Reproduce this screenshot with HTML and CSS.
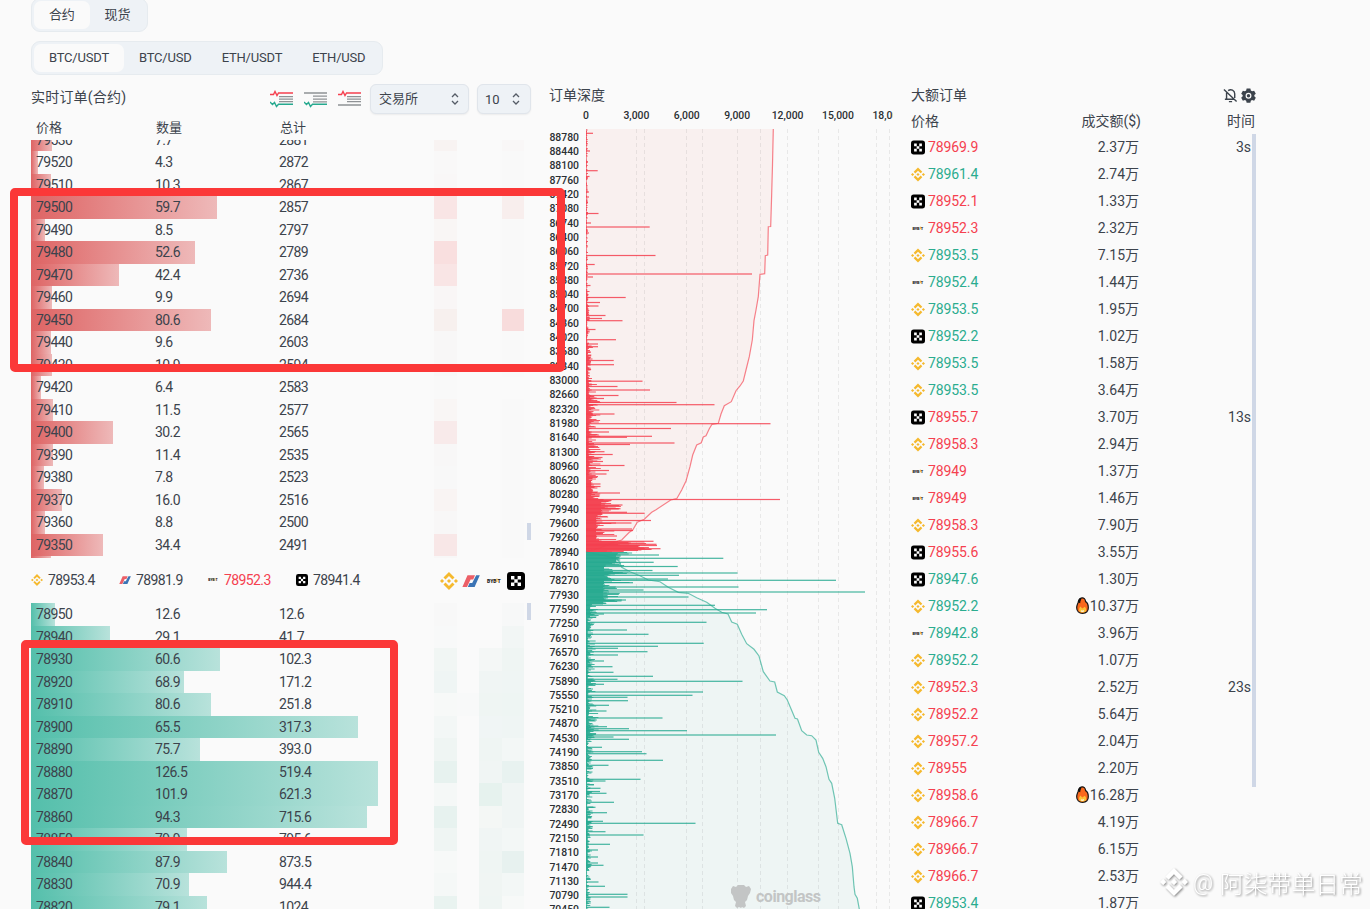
FILE: index.html
```html
<!DOCTYPE html>
<html lang="zh-CN">
<head>
    <meta charset="UTF-8">
    <meta name="viewport" content="width=device-width, initial-scale=1.0">
    <title>订单深度</title>
    <link rel="stylesheet" href="styles.css">
</head>
<body>
    <svg class="sprite" width="0" height="0">
        <symbol id="binance" viewBox="0 0 24 24">
            <path d="M16.624 13.92l2.718 2.716-7.353 7.353-7.353-7.352 2.717-2.717 4.636 4.66 4.635-4.66zm4.637-4.636L24 12l-2.715 2.716L18.568 12l2.693-2.716zm-9.272 0l2.716 2.692-2.717 2.717L9.272 12l2.716-2.715zm-9.273 0L5.41 12l-2.692 2.692L0 12l2.716-2.716zM11.989.012l7.353 7.329-2.718 2.715-4.636-4.636-4.635 4.66-2.717-2.716L11.989.012z"/>
        </symbol>
        <symbol id="okx" viewBox="0 0 18 18">
            <rect width="18" height="18" rx="3.5" fill="#000"/>
            <path fill="#fff" d="M4 4h3.4v3.4H4zM10.6 4H14v3.4h-3.4zM7.3 7.3h3.4v3.4H7.3zM4 10.6h3.4V14H4zM10.6 10.6H14V14h-3.4z"/>
        </symbol>
        <symbol id="bybit" viewBox="0 0 18 18">
            <text x="2" y="11" font-size="5" font-weight="900" textLength="9" fill="#222">BYB</text>
            <rect x="11.4" y="6.6" width="1" height="3.4" fill="#f7a600"/>
            <text x="12.6" y="11" font-size="5" font-weight="900" fill="#222">T</text>
        </symbol>
        <symbol id="bitmex" viewBox="0 0 18 18">
            <path fill="#ec5f67" d="M5.500 3.200h7.500L11.200 7.500H8.600L5 15H.4z"/>
            <path fill="#3b74b5" d="M14.200 3.200h3.600L12.600 15H5.800l1.800-4h2.600z"/>
        </symbol>
        <symbol id="fire" viewBox="0 0 13 17">
            <path fill="#f9681c" stroke="#141414" stroke-width="1.200" d="M5.200 1C8 .4 9.400 2 9.600 4.600 11.600 5.600 12.300 8 12.300 10.800c0 3.400-2.400 5.500-5.800 5.500S.7 14 .7 10.700c0-2.600.9-3.500 1.400-5.300C2.500 3.600 3 1.500 5.200 1z"/>
            <path fill="#111" d="M5.500.8C3 1.200 2.200 3 2.200 5.500L4.200 6.200C4.200 4 5.600 2.500 5.500.8z"/>
            <path fill="#fcc036" d="M4.300 9.600l2 1.800 2.500-1.600c1.600 1.900 1.700 3.200.9 4.600-1.500 1.300-4.800 1.300-6.200 0-.9-1.700-.4-3.100.8-4.800z"/>
            <path fill="#fff" d="M5.200 13.200l1.200.5 1.300-.7v1.800H5.200z"/>
        </symbol>
        <symbol id="sort" viewBox="0 0 10 14">
            <path d="M2 5l3-3 3 3M2 9l3 3 3-3" fill="none" stroke="#555c66" stroke-width="1.3"/>
        </symbol>
    </svg>

    <div class="page">
        <div class="tabs tabs-type">
            <button class="active">合约</button>
            <button>现货</button>
        </div>
        <div class="tabs">
            <button class="active">BTC/USDT</button>
            <button>BTC/USD</button>
            <button>ETH/USDT</button>
            <button>ETH/USD</button>
        </div>

        <div class="board">
            <section class="book">
                <div class="book-bar">
                    <h2>实时订单(合约)</h2>
                    <svg class="mode" viewBox="0 0 24 18" fill="none">
                        <path stroke="#8f9295" stroke-width="1.300" d="M9 6.700h14M9 9.200h14M9 11.700h14"/>
                        <path stroke="#f5404f" stroke-width="1.400" d="M0 4.500h3.500l1.500-3 2 4 1.500-2.500H23"/>
                        <path stroke="#26a98f" stroke-width="1.400" d="M0 12l2.500 2.500 2-2 2 4 2-2.200H23"/>
                    </svg>
                    <svg class="mode" viewBox="0 0 24 18" fill="none">
                        <path stroke="#8f9295" stroke-width="1.300" d="M0 3h23M9 6.200h14M9 9.200h14M9 11.900h14"/>
                        <path stroke="#26a98f" stroke-width="1.400" d="M0 12l2.500 2.500 2-2 2 4 2-2.200H23"/>
                    </svg>
                    <svg class="mode" viewBox="0 0 24 18" fill="none">
                        <path stroke="#8f9295" stroke-width="1.300" d="M9 6.700h14M9 9.200h14M9 11.700h14M0 15h23"/>
                        <path stroke="#f5404f" stroke-width="1.400" d="M0 4.500h3.500l1.500-3 2 4 1.500-2.500H23"/>
                    </svg>
                    <div class="select select-ex"><span>交易所</span><svg><use href="#sort"/></svg></div>
                    <div class="select select-step"><span>10</span><svg><use href="#sort"/></svg></div>
                </div>
                <div class="book-head"><span>价格</span><span>数量</span><span>总计</span></div>
                <div class="rows asks"><div class="rows-inner" id="asks"></div><i class="thumb"></i></div>
                <div class="tickers">
                    <span><svg class="binance"><use href="#binance"/></svg>78953.4</span>
                    <span><svg><use href="#bitmex"/></svg>78981.9</span>
                    <span class="down"><svg><use href="#bybit"/></svg>78952.3</span>
                    <span><svg><use href="#okx"/></svg>78941.4</span>
                    <div class="venues">
                        <svg class="binance"><use href="#binance"/></svg>
                        <svg><use href="#bitmex"/></svg>
                        <svg><use href="#bybit"/></svg>
                        <svg><use href="#okx"/></svg>
                    </div>
                </div>
                <div class="rows bids"><div class="rows-inner" id="bids"></div><i class="thumb"></i></div>
            </section>

            <section class="depth">
                <h2>订单深度</h2>
                <svg id="chart" viewBox="549 103 344 806">
                    <g id="areas"></g>
                    <g id="grid"></g>
                    <g id="bars"></g>
                    <g id="lines"></g>
                    <g id="axis"></g>
                    <g class="brand">
                        <path d="M731 889l2-3 3 1 2-2h6l2 2 3-1 2 3-1 4-2 3-1 4-2 2 1 4-2 2-2-1-1 1-2-1-2 1-2-2 1-4-2-2-1-4-2-3z"/>
                        <text x="756" y="902" textLength="65">coinglass</text>
                    </g>
                </svg>
            </section>

            <section class="trades">
                <div class="trades-bar">
                    <h2>大额订单</h2>
                    <svg viewBox="0 0 16 16" fill="none" stroke="#3c434c" stroke-width="1.500">
                        <path d="M1 1.500l13.500 13M3.800 5v7H2M3.800 12H11.500M5.500 2.800c3-2 7-.3 7 3.400v4.500M6.300 14.500h3.400"/>
                    </svg>
                    <svg viewBox="0 0 16 16">
                        <path fill="#3c434c" d="M6 .500h4l.5 2.200 1.300.8 2.200-.7 1.800 3.200L14.200 7.500v1.300l1.600 1.500-1.800 3.200-2.200-.7-1.300.8-.5 2.200H6l-.5-2.200-1.300-.8-2.200.7-1.800-3.200L1.800 8.800V7.500L.2 6l1.800-3.200 2.200.7 1.300-.8z"/>
                        <circle cx="8" cy="8.200" r="2.500" fill="none" stroke="#fafafa" stroke-width="1.300"/>
                    </svg>
                </div>
                <div class="trade head"><span>价格</span><span>成交额($)</span><span>时间</span></div>
                <div class="trade-list">
                    <div id="trades"></div>
                    <i class="thumb"></i>
                </div>
            </section>
        </div>

        <div class="mark mark-asks"></div>
        <div class="mark mark-bids"></div>
        <div class="credit"><svg><use href="#binance"/></svg><span class="at">@</span><span>阿柒带单日常</span></div>
    </div>
    <script src="script.js"></script>
</body>
</html>
```
FILE: styles.css
```css
* {
    box-sizing: border-box;
}
body {
    margin: 0;
    height: 909px;
    overflow: hidden;
    background-color: #fafafa;
    color: #3c434c;
    font-family: Roboto, "Noto Sans CJK SC", sans-serif;
    font-size: 14px;
}
h2 {
    margin: 0;
    font-size: 14px;
    font-weight: 400;
    line-height: 22px;
}
.sprite {
    display: block;
}
.page {
    position: relative;
    height: 909px;
    padding-left: 31px;
    overflow: hidden;
}
.tabs {
    display: flex;
    width: max-content;
    height: 34px;
    padding: 2px;
    border: 1px solid #e6ebef;
    border-radius: 9px;
    background-color: #eef2f6;
}
.tabs-type {
    margin-top: -2px;
    margin-bottom: 9px;
}
.tabs button {
    padding: 0 15px 2px;
    border: none;
    border-radius: 7px;
    background: none;
    color: #3c434c;
    font: 13px Roboto, "Noto Sans CJK SC", sans-serif;
    letter-spacing: -0.2px;
}
.tabs-type button {
    padding-bottom: 4px;
}
.tabs .active {
    background-color: #fafafa;
}
.board {
    display: flex;
    gap: 18px;
    margin-top: 9px;
}
.book {
    width: 500px;
}
.book-bar {
    display: flex;
    align-items: center;
    height: 30px;
}
.book-bar h2 {
    flex: 1;
    margin-top: -4px;
    letter-spacing: 0.2px;
}
.mode {
    width: 24px;
    height: 18px;
    margin-right: 10px;
}
.select {
    display: flex;
    align-items: center;
    justify-content: space-between;
    height: 30px;
    padding: 0 8px;
    border: 1px solid #e0e5eb;
    border-radius: 6px;
    background-color: #eef2f6;
    box-shadow: 0 1px 2px rgba(0, 0, 0, 0.06);
    font-size: 13px;
}
.select span {
    margin-top: -3px;
}
.select svg {
    width: 10px;
    height: 14px;
    margin-top: -1px;
}
.select-ex {
    width: 99px;
    margin-left: -2px;
    margin-right: 8px;
}
.select-step {
    width: 54px;
    padding: 0 9px 0 7px;
}
.select-step span {
    margin-top: 0;
}
.book-head,
.row {
    display: grid;
    grid-template-columns: 119px 124px 155px repeat(4, 22.5px);
    padding-left: 5px;
}
.book-head {
    height: 26px;
    line-height: 28px;
    font-size: 13px;
}
.book-head span:nth-child(n+2) {
    padding-left: 1px;
}
.rows {
    position: relative;
    overflow: hidden;
}
.asks {
    height: 418px;
}
.asks .rows-inner {
    margin-top: -11.5px;
}
.bids {
    height: 306px;
}
.row {
    height: 22.5px;
    line-height: 23px;
    letter-spacing: -0.6px;
    background-repeat: no-repeat;
}
.asks .row {
    background-image: linear-gradient(to right, #de6464, #eeb9b9);
}
.bids .row {
    background-image: linear-gradient(to right, #54bfab, #b8e2db);
}
.thumb {
    position: absolute;
    right: 0;
    width: 4px;
    background-color: #cfd7e6;
}
.asks .thumb {
    top: 383px;
    height: 17px;
}
.bids .thumb {
    top: 0;
    height: 17px;
}
.tickers {
    display: grid;
    grid-template-columns: 88px 88px 89px 144px auto;
    align-items: center;
    height: 45px;
    letter-spacing: -0.6px;
}
.tickers span {
    display: flex;
    align-items: center;
    gap: 5px;
    margin-top: -1px;
}
.tickers span svg {
    width: 12px;
    height: 12px;
}
.venues {
    display: flex;
    gap: 4.300px;
}
.venues svg {
    width: 18px;
    height: 18px;
}
.binance {
    fill: #f5b92e;
}
.down {
    color: #f5404f;
}
.up {
    color: #2bac8f;
}
.depth {
    width: 344px;
}
.depth h2 {
    height: 19px;
}
#chart {
    display: block;
    width: 344px;
    height: 806px;
}
#grid line {
    stroke: rgba(60, 60, 60, 0.09);
    stroke-dasharray: 4 3;
}
#axis text {
    font-size: 10.400px;
    font-weight: 500;
    fill: #2b2f33;
}
.brand {
    fill: #c3c5c5;
}
.brand text {
    font-size: 16px;
    font-weight: 700;
}
.trades {
    width: 345px;
}
.trades-bar {
    display: flex;
    align-items: center;
    gap: 3px;
    height: 22px;
}
.trades-bar h2 {
    flex: 1;
}
.trades-bar svg {
    width: 15px;
    height: 15px;
}
.trade {
    display: grid;
    grid-template-columns: 100px 128px 112px;
    height: 27px;
    line-height: 27px;
}
.trade > span:first-child {
    display: flex;
    align-items: center;
    gap: 3px;
    letter-spacing: -0.1px;
}
.trade > span:nth-child(n+2) {
    text-align: right;
}
.trade svg {
    width: 14px;
    height: 15px;
}
.trade .fire {
    width: 13px;
    height: 17px;
    margin-right: 1px;
    vertical-align: -3px;
}
.head {
    grid-template-columns: 100px 130px 114px;
    height: 28px;
    line-height: 31px;
}
.trade-list {
    position: relative;
    height: 775px;
    overflow: hidden;
}
.trade-list .thumb {
    top: 0;
    height: 653px;
}
.mark {
    position: absolute;
    border: 8px solid #fb3838;
    border-radius: 5px;
}
.mark-asks {
    left: 10px;
    top: 188px;
    width: 555px;
    height: 184px;
}
.mark-bids {
    left: 21px;
    top: 640px;
    width: 377px;
    height: 205px;
}
.credit {
    position: absolute;
    left: 1160px;
    top: 864px;
    display: flex;
    align-items: center;
    height: 36px;
    color: #fff;
    font-size: 23.800px;
    font-weight: 300;
    white-space: nowrap;
    filter: drop-shadow(1px 1px 1px rgba(0, 0, 0, 0.45));
}
.credit svg {
    width: 28px;
    height: 28px;
    fill: #fff;
}
.credit .at {
    width: 27px;
    margin-left: 5px;
    font-size: 22px;
}
```
FILE: script.js
```javascript
// price, amount, total, bar width, heat of the four venues
const asks = [
    ["79530", "7.7", "2881", 21, "#f8f3f2", "", "", "#f9f7f7"],
    ["79520", "4.3", "2872", 7, "#f9f8f8", "", "", "#f9f9f9"],
    ["79510", "10.3", "2867", 20, "#f9f7f7", "", "", "#f9f9f9"],
    ["79500", "59.7", "2857", 186, "#f9e5e5", "", "", "#f8eeed"],
    ["79490", "8.5", "2797", 14, "#f9f6f5", "", "", "#f9f9f9"],
    ["79480", "52.6", "2789", 164, "#f9dfdf", "", "", "#f9f9f9"],
    ["79470", "42.4", "2736", 88, "#f9e5e5", "", "", "#f9f9f9"],
    ["79460", "9.9", "2694", 21, "#f9f6f6", "", "", "#f9f9f9"],
    ["79450", "80.6", "2684", 180, "#f7f0ee", "", "", "#f8dcdc"],
    ["79440", "9.6", "2603", 20, "#f8f7f7", "", "", "#f9f9f9"],
    ["79430", "10.9", "2594", 21, "#f8f7f7", "", "", "#f9f9f9"],
    ["79420", "6.4", "2583", 10, "#f9f9f9", "", "", ""],
    ["79410", "11.5", "2577", 22, "#f9f6f5", "", "", "#f9f9f9"],
    ["79400", "30.2", "2565", 82, "#f8eaea", "", "", "#f9f9f9"],
    ["79390", "11.4", "2535", 22, "#f8f7f7", "", "", "#f9f9f9"],
    ["79380", "7.8", "2523", 13, "#f8f8f8", "", "", "#f9f9f9"],
    ["79370", "16.0", "2516", 31, "#f9f4f3", "", "", "#f9f9f9"],
    ["79360", "8.8", "2500", 14, "#f8f7f7", "", "", "#f9f9f9"],
    ["79350", "34.4", "2491", 72, "#f8e7e7", "", "", "#f9f9f9"],
    ["79340", "9.8", "2457", 20, "#f8f7f7", "", "", "#f9f9f9"]
];
const bids = [
    ["78950", "12.6", "12.6", 24, "#f8f8f8", "", "", "#f7f8f8"],
    ["78940", "29.1", "41.7", 79, "#f8f9f9", "", "", "#f2f6f5"],
    ["78930", "60.6", "102.3", 189, "#f1f6f4", "", "#f4f7f6", "#eff5f3"],
    ["78920", "68.9", "171.2", 153, "#eff5f4", "", "#f0f5f4", "#eff5f4"],
    ["78910", "80.6", "251.8", 180, "#f7f9f8", "#f8f9f9", "#eff5f3", "#eef5f3"],
    ["78900", "65.5", "317.3", 327, "#f3f7f6", "", "#f0f5f5", "#eff5f4"],
    ["78890", "75.7", "393.0", 169, "#eff5f3", "", "#eff5f3", "#f3f7f6"],
    ["78880", "126.5", "519.4", 347, "#e7f2ef", "", "#f0f5f4", "#e8f2f0"],
    ["78870", "101.9", "621.3", 347, "#f5f8f7", "", "#e6f2ee", "#f0f5f4"],
    ["78860", "94.3", "715.6", 336, "#e7f2ef", "", "#f4f7f5", "#f0f5f4"],
    ["78850", "79.9", "795.6", 156, "#eff5f3", "", "#f0f5f4", "#f3f7f6"],
    ["78840", "87.9", "873.5", 196, "#f7f9f8", "", "#eff5f3", "#e7f1ef"],
    ["78830", "70.9", "944.4", 158, "#f5f8f7", "", "#f0f5f3", "#f3f7f6"],
    ["78820", "79.1", "1024", 176, "#e9f3f0", "", "#eff5f3", "#f7f9f8"]
];

function renderBook(id, list) {
    document.getElementById(id).innerHTML = list.map(r =>
        `<div class="row" style="background-size:${r[3]}px 100%"><span>${r[0]}</span><span>${r[1]}</span><span>${r[2]}</span>` +
        r.slice(4).map(c => `<i style="background:${c || "none"}"></i>`).join("") + "</div>"
    ).join("");
}
renderBook("asks", asks);
renderBook("bids", bids);

// venue, direction, price, amount, time, big
const trades = [
    ["okx", "down", "78969.9", "2.37", "3s"],
    ["binance", "up", "78961.4", "2.74"],
    ["okx", "down", "78952.1", "1.33"],
    ["bybit", "down", "78952.3", "2.32"],
    ["binance", "up", "78953.5", "7.15"],
    ["bybit", "up", "78952.4", "1.44"],
    ["binance", "up", "78953.5", "1.95"],
    ["okx", "up", "78952.2", "1.02"],
    ["binance", "up", "78953.5", "1.58"],
    ["binance", "up", "78953.5", "3.64"],
    ["okx", "down", "78955.7", "3.70", "13s"],
    ["binance", "down", "78958.3", "2.94"],
    ["bybit", "down", "78949", "1.37"],
    ["bybit", "down", "78949", "1.46"],
    ["binance", "down", "78958.3", "7.90"],
    ["okx", "down", "78955.6", "3.55"],
    ["okx", "up", "78947.6", "1.30"],
    ["binance", "up", "78952.2", "10.37", "", true],
    ["bybit", "up", "78942.8", "3.96"],
    ["binance", "up", "78952.2", "1.07"],
    ["binance", "down", "78952.3", "2.52", "23s"],
    ["binance", "down", "78952.2", "5.64"],
    ["binance", "down", "78957.2", "2.04"],
    ["binance", "down", "78955", "2.20"],
    ["binance", "down", "78958.6", "16.28", "", true],
    ["binance", "down", "78966.7", "4.19"],
    ["binance", "down", "78966.7", "6.15"],
    ["binance", "down", "78966.7", "2.53"],
    ["okx", "up", "78953.4", "1.87"]
];
document.getElementById("trades").innerHTML = trades.map(t =>
    `<div class="trade"><span class="${t[1]}"><svg class="${t[0]}"><use href="#${t[0]}"/></svg>${t[2]}</span>` +
    `<span>${t[5] ? '<svg class="fire"><use href="#fire"/></svg>' : ""}${t[3]}万</span><span>${t[4] || ""}</span></div>`
).join("");

// depth chart
const RED = "#f5404f";
const GREEN = "#26a98f";
const X0 = 586;
const askLine = [[773.3,129],[772.5,165],[771.500,200],[770.7,226.500],[768.3,226.7],[767.7,255],[765.3,255.7],[764.7,273.7],[760,274.3],[758.3,296.7],[756,310],[754,320.7],[752.3,340],[749.3,356.7],[746,370],[743.3,381],[740,386],[736,390.7],[731.3,401.7],[724.3,405.7],[721,414],[718.3,423.3],[712,424.3],[709.3,428.7],[706,435.7],[703.3,437],[701.3,442.7],[696.7,445],[692.7,455],[690,466.7],[686,481],[681.7,490],[676.7,498.7],[670.7,500],[656,509.7],[651.7,512.3],[644.3,519.3],[637.3,522.3],[632.7,530],[629.3,532.3],[621.7,540],[612,543],[600,548],[586,552]];
const bidLine = [[586,552],[606,556],[617,559],[619.3,561.7],[621.7,567.3],[630,571.7],[640,575.7],[648.3,580],[660,581.7],[668.3,587.3],[678.3,592.3],[688.3,593.3],[696.7,597.7],[706.7,602.3],[715,608.3],[721.7,612.3],[728,614],[731.7,622],[737.3,624.3],[741.7,634.3],[746.7,643.7],[754,649.3],[759,656],[763.3,671.7],[770,681],[774.7,682],[777.3,692],[784.3,695.7],[787.3,700],[795,718.3],[797.5,719],[801.7,730.7],[806.7,735],[811.7,735.7],[816,740],[818.7,752.3],[822.7,758.3],[826,766.7],[829,779.3],[831.7,783.3],[834.7,798.3],[837.7,823.3],[841.7,824.7],[846,838.3],[850,853.3],[852.3,866.7],[854,886.7],[855,894.3],[857.3,898.3],[859.3,909]];
// large orders: y, right end
const walls = [[133.3,593],[151,590],[162,588],[170.7,597.7],[176.5,589.5],[192,589],[197,589],[213.5,598.5],[223,591],[227,649.7],[233,589],[255.5,655.5],[264.5,594.7],[274,752],[277,593],[285.5,590.5],[297.5,625.7],[302.5,600],[306,598.5],[315.5,605.5],[318.5,602],[320.7,622.5],[329.5,595.5],[339.7,616],[344,598],[346.7,598],[360.5,613.7],[364.7,614],[381.2,642.5],[386.5,617.5],[390,650],[395.5,618.5],[398.5,604],[402.5,676.5],[404.7,714.5],[414,614.5],[423.7,770.5],[428.5,671],[432,609],[436.3,652],[437.3,627],[443,674.5],[444.5,630],[451.7,604.5],[454.5,612.7],[457.5,602.5],[461.5,603],[465.5,624.5],[470.5,609],[474,606.5],[484,600.5],[486.5,600.5],[493,620],[499.5,780],[505,622.5],[508.7,620.5],[512.3,627],[513.3,644.7],[520.5,651],[523,631.5],[529,632],[530.5,633],[536,617],[541.3,653.5],[544.3,656.5],[545.5,657],[548.7,660.5],
    [555,659],[558.3,723.3],[562.3,653.7],[566.5,677.7],[570.5,652.5],[573,737.5],[575.3,679],[579,668],[580.3,836],[582.7,633],[587,738.5],[590,643.5],[592,865],[597,688.5],[600,626],[605.3,715],[609.7,767],[613,756],[614,604],[622.3,706.5],[630,627],[634.3,648.5],[643.3,703.7],[646.3,658],[648.300,618],[651.7,647.5],[655,618],[661,604],[666.7,612.5],[672.3,613.5],[676.3,653],[679.3,617.5],[681.3,742.5],[684.3,604],[692,703],[695.3,692.5],[697.3,627.5],[700.7,628],[705.3,609],[711,606.5],[718,662.5],[726.7,607],[728.7,629],[730.7,687],[735,776],[737,613.5],[739.3,629],[747.3,602],[751.7,642],[753.7,646.5],[760.3,663],[765.3,608.5],[779.3,640.5],[781,605.5],[788.3,600.5],[791.5,600],[793.3,606.5],[802.3,614],[807.3,595.5],[812.7,607],[821.3,603],[823.3,695.5],[831.7,605.5],[835,643.5],[844.3,610],[850,598],[857,598],[863,598],[865.3,603.5],[882,598.5],[886.3,605],[894.3,627.5],[897,627.5],[907.3,609.5]];
// small orders: until y, min, max length
const density = [[290,0.3,2],[345,0.8,4],[380,1.5,7],[480,2.5,15],[499,5,15],[515,15,38],[541,10,32],[545,32,66],[550.5,52,74],[552,20,40],[561,30,58],[584,18,45],[604,17,38],[618,4,14],[700,1.5,10],[740,2,13],[815,0.8,8],[866,1.5,7],[909,0.5,5]];

let seed = 7;
function rand() {
    seed = (seed * 16807) % 2147483647;
    return seed / 2147483647;
}
function bar(y, w, h, o) {
    return `<rect x="${X0}" y="${(y - h / 2).toFixed(1)}" width="${w.toFixed(1)}" height="${h}" fill="${y < 552.3 ? RED : GREEN}" opacity="${o}"/>`;
}
let bars = "";
for (let y = 129.5; y < 909; y += 0.5) {
    const d = density.find(s => y <= s[0]);
    const r = rand();
    bars += bar(y, d[1] + (d[2] - d[1]) * r * r * r, 1, 0.85);
}
walls.forEach(w => {
    bars += bar(w[0], w[1] - X0, 1.2, 0.85);
});
document.getElementById("bars").innerHTML = bars;

const path = pts => "M" + pts.map(p => p.join(" ")).join("L");
document.getElementById("areas").innerHTML =
    `<path d="${path(askLine)}V129Z" fill="#e2402f" opacity="0.05"/>` +
    `<path d="${path(bidLine)}V909H586Z" fill="${GREEN}" opacity="0.055"/>`;
document.getElementById("lines").innerHTML =
    `<path d="${path(askLine)}" fill="none" stroke="${RED}" stroke-width="1.2" opacity="0.65"/>` +
    `<path d="${path(bidLine)}" fill="none" stroke="${GREEN}" stroke-width="1.2" opacity="0.65"/>`;
document.getElementById("grid").innerHTML =
    [586.5, 636.5, 644.5, 686.5, 702.5, 737.5, 760.5, 787.5, 818.5, 838.5, 876.5, 889.5]
        .map(x => `<line x1="${x}" x2="${x}" y1="129" y2="909"/>`).join("");

let labels = ["0", "3,000", "6,000", "9,000", "12,000", "15,000", "18,000"]
    .map((t, i) => `<text x="${586 + i * 50.4}" y="119" text-anchor="middle">${t}</text>`).join("");
for (let i = 0; i <= 54; i++) {
    const price = i < 29 ? 88780 - i * 340 : i === 29 ? 78940 : 78610 - (i - 30) * 340;
    labels += `<text x="579" y="${(140.7 + i * 14.31).toFixed(1)}" text-anchor="end">${price}</text>`;
}
document.getElementById("axis").innerHTML = labels;
```
